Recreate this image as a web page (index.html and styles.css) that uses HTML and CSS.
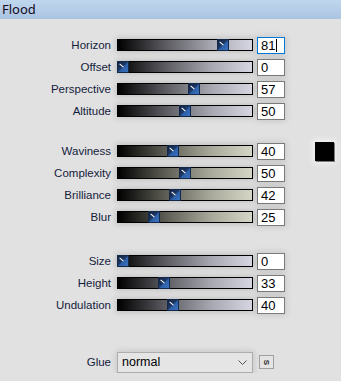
FILE: index.html
```html
<!DOCTYPE html>
<html lang="en">
<head>
    <meta charset="UTF-8">
    <title>Flood</title>
    <link rel="stylesheet" href="styles.css">
</head>
<body>
    <div class="titlebar">Flood</div>

    <div class="panel">
        <div class="group group-shape">
            <div class="row">
                <span class="label">Horizon</span>
                <div class="track"><span class="thumb" style="left: 99px"></span></div>
                <span class="num focused">81<i class="caret"></i></span>
            </div>
            <div class="row">
                <span class="label">Offset</span>
                <div class="track"><span class="thumb" style="left: -1px"></span></div>
                <span class="num">0</span>
            </div>
            <div class="row">
                <span class="label">Perspective</span>
                <div class="track"><span class="thumb" style="left: 70px"></span></div>
                <span class="num">57</span>
            </div>
            <div class="row">
                <span class="label">Altitude</span>
                <div class="track"><span class="thumb" style="left: 61px"></span></div>
                <span class="num">50</span>
            </div>
        </div>

        <div class="group group-light warm">
            <div class="row">
                <span class="label">Waviness</span>
                <div class="track"><span class="thumb" style="left: 49px"></span></div>
                <span class="num">40</span>
                <span class="swatch"></span>
            </div>
            <div class="row">
                <span class="label">Complexity</span>
                <div class="track"><span class="thumb" style="left: 61px"></span></div>
                <span class="num">50</span>
            </div>
            <div class="row">
                <span class="label">Brilliance</span>
                <div class="track"><span class="thumb" style="left: 51px"></span></div>
                <span class="num">42</span>
            </div>
            <div class="row">
                <span class="label">Blur</span>
                <div class="track"><span class="thumb" style="left: 30px"></span></div>
                <span class="num">25</span>
            </div>
        </div>

        <div class="group group-waves">
            <div class="row">
                <span class="label">Size</span>
                <div class="track"><span class="thumb" style="left: -1px"></span></div>
                <span class="num">0</span>
            </div>
            <div class="row">
                <span class="label">Height</span>
                <div class="track"><span class="thumb" style="left: 40px"></span></div>
                <span class="num">33</span>
            </div>
            <div class="row">
                <span class="label">Undulation</span>
                <div class="track"><span class="thumb" style="left: 49px"></span></div>
                <span class="num">40</span>
            </div>
        </div>

        <div class="row glue-row">
            <span class="label">Glue</span>
            <div class="select">
                <span>normal</span>
                <svg class="chevron" width="9" height="5" viewBox="0 0 9 5">
                    <path d="M0.5 0.5 L4.5 4.5 L8.5 0.5" fill="none" stroke="#555" stroke-width="1"/>
                </svg>
            </div>
            <span class="s-button"><b>S</b></span>
        </div>
    </div>
</body>
</html>
```

FILE: styles.css
```css
* {
    margin: 0;
    padding: 0;
    box-sizing: border-box;
}

body {
    font-family: 'Liberation Sans', Arial, sans-serif;
    background: #e1e1e1;
    color: #141c3c;
    overflow: hidden;
}

.titlebar {
    height: 19px;
    line-height: 19px;
    padding-left: 2px;
    font-family: 'Noto Sans', 'Liberation Sans', sans-serif;
    font-size: 13px;
    color: #14091a;
    background: linear-gradient(#c0d6ee, #aac4e2);
}

.panel {
    padding-top: 15px;
}

.group-shape {
    margin-bottom: 18px;
}

.group-light {
    margin-bottom: 22px;
}

.group-waves {
    margin-bottom: 35px;
}

.row {
    display: flex;
    align-items: center;
    height: 22px;
}

.label {
    width: 111px;
    margin-right: 6px;
    text-align: right;
    font-size: 11.5px;
}

.track {
    position: relative;
    width: 136px;
    height: 12px;
    border: 1px solid #000;
    background: linear-gradient(90deg, #000 0%, #5a5a60 35%, #a8a8b2 70%, #d6d6e2 100%);
    box-shadow: 0 0 6px 1px rgba(0,0,0,0.16);
}

.warm .track {
    background: linear-gradient(90deg, #000 0%, #5c5c54 35%, #aaaa9c 70%, #d6d6c6 100%);
}

.thumb {
    position: absolute;
    top: -1px;
    width: 12px;
    height: 12px;
    background: linear-gradient(135deg, #0f1f3c 0%, #1e3a68 48%, #2c5ea6 52%, #3a72c0 100%);
    border: 1px solid #14284a;
}

.thumb::after {
    content: '';
    position: absolute;
    left: 1px;
    top: 3px;
    width: 5px;
    height: 1px;
    background: #fff;
    transform: rotate(40deg);
}

.num {
    position: relative;
    width: 28px;
    height: 17px;
    margin-left: 4px;
    padding-left: 3px;
    line-height: 15px;
    font-size: 13px;
    color: #000;
    background: #fff;
    border: 1px solid #7a7a7a;
    box-shadow: 0 0 6px 1px rgba(0,0,0,0.12);
}

.num.focused {
    border-color: #0078d7;
}

.caret {
    display: inline-block;
    width: 1px;
    height: 13px;
    margin-left: 1px;
    vertical-align: -2px;
    background: #000;
}

.swatch {
    width: 19px;
    height: 19px;
    margin-left: 30px;
    background: #000;
    box-shadow: 1px 1px 0 #7a7a7a, 0 0 6px 2px rgba(255,255,255,0.6);
}

.select {
    display: flex;
    align-items: center;
    justify-content: space-between;
    width: 136px;
    height: 21px;
    padding: 0 5px 0 4px;
    font-size: 12.5px;
    color: #000;
    background: #e5e5e5;
    border: 1px solid #adadad;
    box-shadow: 0 0 6px 1px rgba(0,0,0,0.12);
}

.s-button {
    display: flex;
    align-items: center;
    justify-content: center;
    width: 15px;
    height: 14px;
    margin-left: 6px;
    border: 1px solid #a0a0a0;
    background: #e4e4e4;
    font-size: 8px;
    color: #222;
}

.s-button b {
    transform: rotate(90deg);
}
```
